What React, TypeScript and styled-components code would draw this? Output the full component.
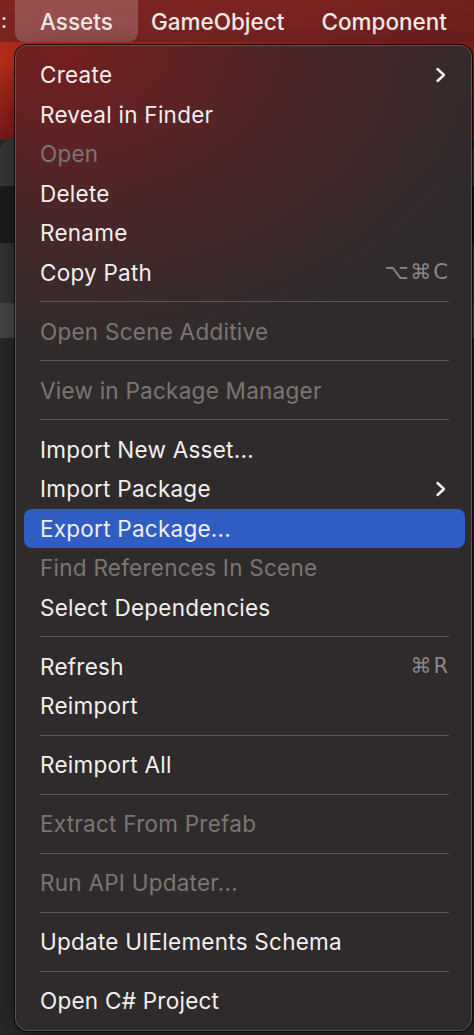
import styled, { createGlobalStyle } from "styled-components";

type Entry =
  | { kind: "item"; label: string; disabled?: boolean; submenu?: boolean; shortcut?: string; active?: boolean }
  | { kind: "separator" };

const entries: Entry[] = [
  { kind: "item", label: "Create", submenu: true },
  { kind: "item", label: "Reveal in Finder" },
  { kind: "item", label: "Open", disabled: true },
  { kind: "item", label: "Delete" },
  { kind: "item", label: "Rename" },
  { kind: "item", label: "Copy Path", shortcut: "⌥⌘C" },
  { kind: "separator" },
  { kind: "item", label: "Open Scene Additive", disabled: true },
  { kind: "separator" },
  { kind: "item", label: "View in Package Manager", disabled: true },
  { kind: "separator" },
  { kind: "item", label: "Import New Asset..." },
  { kind: "item", label: "Import Package", submenu: true },
  { kind: "item", label: "Export Package...", active: true },
  { kind: "item", label: "Find References In Scene", disabled: true },
  { kind: "item", label: "Select Dependencies" },
  { kind: "separator" },
  { kind: "item", label: "Refresh", shortcut: "⌘R" },
  { kind: "item", label: "Reimport" },
  { kind: "separator" },
  { kind: "item", label: "Reimport All" },
  { kind: "separator" },
  { kind: "item", label: "Extract From Prefab", disabled: true },
  { kind: "separator" },
  { kind: "item", label: "Run API Updater...", disabled: true },
  { kind: "separator" },
  { kind: "item", label: "Update UIElements Schema" },
  { kind: "separator" },
  { kind: "item", label: "Open C# Project" },
];

const Chevron = () => (
  <svg width="12" height="16" viewBox="0 0 12 16">
    <polyline points="2.5,2 9,8 2.5,14" fill="none" stroke="#f4f0f0" strokeWidth="2.4" strokeLinecap="round" strokeLinejoin="round" />
  </svg>
);

function App() {
  return (
    <Screen>
      <GlobalStyle />
      <MenuBar>
        <Stub>:</Stub>
        <BarItem $open $padLeft={25} $padRight={25}>
          Assets
        </BarItem>
        <BarItem $padLeft={13} $padRight={19}>
          GameObject
        </BarItem>
        <BarItem $padLeft={18} $padRight={19}>
          Component
        </BarItem>
      </MenuBar>

      <Workspace>
        <Wallpaper />
        <EditorWindow>
          <Toolbar />
          <DarkStrip />
          <Panel />
          <PanelTab />
          <PanelBody />
        </EditorWindow>
      </Workspace>

      <Dropdown>
        {entries.map((e, i) =>
          e.kind === "separator" ? (
            <Separator key={i} />
          ) : (
            <Row key={i} $active={e.active}>
              <Label $disabled={e.disabled}>{e.label}</Label>
              {e.submenu && <Chevron />}
              {e.shortcut && <Shortcut>{e.shortcut}</Shortcut>}
            </Row>
          )
        )}
      </Dropdown>
    </Screen>
  );
}

export default App;

const GlobalStyle = createGlobalStyle`
  html, body {
    margin: 0;
    padding: 0;
    background: #2a2a2a;
  }
  body {
    font-family: Inter, "Noto Sans", "DejaVu Sans", sans-serif;
    -webkit-font-smoothing: antialiased;
  }
`;

const Screen = styled.div`
  position: relative;
  width: 474px;
  height: 1035px;
  overflow: hidden;
  background: #2a2a2a;
`;

const MenuBar = styled.div`
  display: flex;
  align-items: stretch;
  height: 42px;
  background: linear-gradient(90deg, #7e2522 0%, #7a2421 60%, #6f201e 100%);
`;

const Stub = styled.div`
  display: flex;
  align-items: center;
  width: 15px;
  padding-left: 1px;
  box-sizing: border-box;
  font-size: 20px;
  font-weight: 500;
  color: #f6eeec;
`;

const BarItem = styled.div<{ $open?: boolean; $padLeft: number; $padRight: number }>`
  display: flex;
  align-items: center;
  padding: 0 ${(p) => p.$padRight}px 0 ${(p) => p.$padLeft}px;
  font-size: 22.5px;
  font-weight: 500;
  color: #f6eeec;
  border-radius: 0 0 9px 9px;
  background: ${(p) => (p.$open ? "rgba(255, 255, 255, 0.2)" : "transparent")};
`;

const Workspace = styled.div`
  display: flex;
  flex-direction: column;
  height: 993px;
`;

const Wallpaper = styled.div`
  height: 98px;
  background: radial-gradient(ellipse at 0% 20%, #c2321f 0%, #8e1f1a 60%, #6a1b19 100%);
`;

const EditorWindow = styled.div`
  flex: 1;
  display: flex;
  flex-direction: column;
  background: #2a2a2a;
  border-radius: 14px 14px 0 0;
  overflow: hidden;
  margin-top: -2px;
`;

const Toolbar = styled.div`
  height: 48px;
  background: #3c3c3c;
`;

const DarkStrip = styled.div`
  height: 57px;
  background: #1e1e1e;
`;

const Panel = styled.div`
  height: 60px;
  background: #383838;
`;

const PanelTab = styled.div`
  height: 35px;
  background: #4b4b4b;
`;

const PanelBody = styled.div`
  flex: 1;
  background: #2b2b2b;
`;

const Dropdown = styled.div`
  position: absolute;
  left: 15px;
  top: 45px;
  width: 457px;
  box-sizing: border-box;
  padding: 9px 6px 9px 8px;
  border: 1px solid #5c5758;
  border-radius: 12px;
  background:
    radial-gradient(ellipse 460px 310px at 10% 0%, rgba(130, 28, 30, 0.85) 0%, rgba(110, 32, 34, 0.4) 55%, rgba(48, 43, 44, 0) 100%),
    #2f2b2c;
  box-shadow: 0 0 0 1px rgba(0, 0, 0, 0.75), 0 12px 40px rgba(0, 0, 0, 0.5);
`;

const Row = styled.div<{ $active?: boolean }>`
  display: flex;
  align-items: center;
  justify-content: space-between;
  height: 39.5px;
  padding: 0 18px 0 16px;
  border-radius: 8px;
  background: ${(p) => (p.$active ? "#2f5dc4" : "transparent")};
`;

const Label = styled.span<{ $disabled?: boolean }>`
  font-size: 22.5px;
  font-weight: 400;
  letter-spacing: 0.25px;
  color: ${(p) => (p.$disabled ? "#7b7574" : "#f3efef")};
  white-space: nowrap;
`;

const Shortcut = styled.span`
  margin-right: -3px;
  font-size: 21px;
  color: #8b8687;
  letter-spacing: 2px;
  font-family: "DejaVu Sans", Inter, sans-serif;
`;

const Separator = styled.div`
  height: 19.5px;
  display: flex;
  align-items: center;
  padding: 0 16px;
  &::before {
    content: "";
    flex: 1;
    height: 1px;
    background: #5b5657;
  }
`;
